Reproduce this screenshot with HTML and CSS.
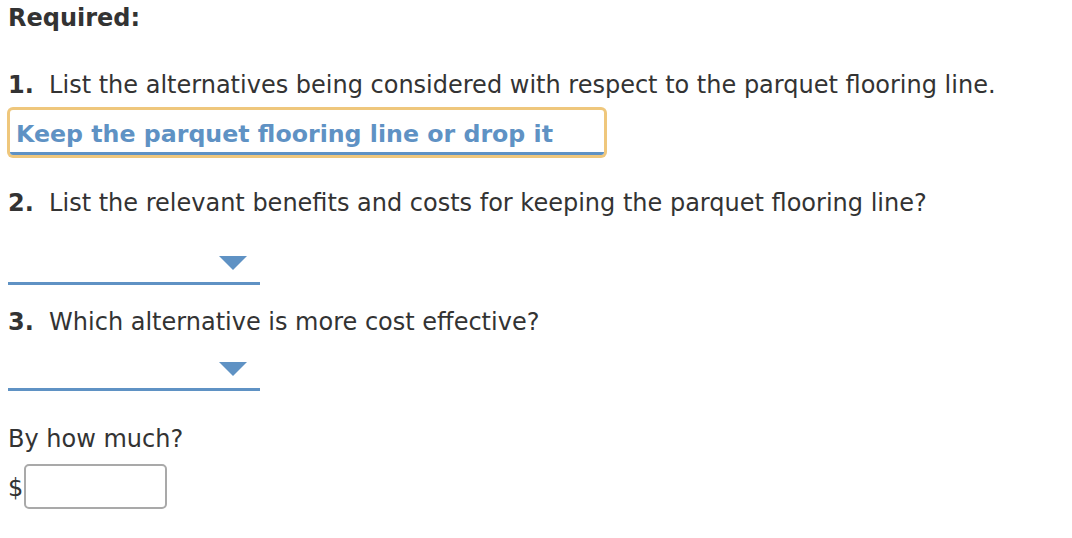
FILE: index.html
```html
<!DOCTYPE html>
<html>
<head lang="en">
    <meta charset="UTF-8">
    <title>Required</title>
    <link rel="stylesheet" href="styles.css">
</head>
<body>
<div class="required">Required:</div>

<div class="question q1"><b>1.</b>&nbsp; List the alternatives being considered with respect to the parquet flooring line.</div>
<div class="answer-box">
    <span class="answer-text">Keep the parquet flooring line or drop it</span>
</div>

<div class="question q2"><b>2.</b>&nbsp; List the relevant benefits and costs for keeping the parquet flooring line?</div>
<div class="dropdown first">
    <span class="arrow"></span>
</div>

<div class="question q3"><b>3.</b>&nbsp; Which alternative is more cost effective?</div>
<div class="dropdown">
    <span class="arrow"></span>
</div>

<div class="question q4">By how much?</div>
<div class="amount">
    <span class="dollar">$</span>
    <input type="text" class="amount-input">
</div>
</body>
</html>
```

FILE: styles.css
```css
body {
    margin: 0px;
    padding: 0px 8px;
    background: #ffffff;
    color: #333333;
    font-family: "DejaVu Sans", Verdana, sans-serif;
    font-size: 24px;
}
.required {
    font-weight: bold;
    height: 36px;
    line-height: 36px;
}
.question {
    line-height: 30px;
    height: 30px;
    white-space: nowrap;
}
.q1 {
    margin-top: 34px;
}
.answer-box {
    width: 588px;
    height: 42px;
    margin: 10px 0px 0px 2px;
    border-bottom: 3px solid #5f92c4;
    border-radius: 3px;
    box-shadow: 0px 0px 0px 3px #efc77c;
    display: flex;
    align-items: center;
    padding-left: 6px;
}
.answer-text {
    color: #5f92c4;
    font-weight: bold;
    font-size: 23.7px;
    padding-top: 5px;
}
.q2 {
    margin-top: 33px;
}
.dropdown {
    width: 252px;
    height: 51px;
    border-bottom: 3px solid #5f92c4;
    display: flex;
    justify-content: flex-end;
    align-items: flex-start;
}
.dropdown.first {
    margin-top: 13px;
}
.arrow {
    width: 0px;
    height: 0px;
    margin: 25px 13px 0px 0px;
    border-left: 14px solid transparent;
    border-right: 14px solid transparent;
    border-top: 14px solid #5f92c4;
}
.q3 {
    margin-top: 22px;
}
.q4 {
    margin-top: 33px;
}
.amount {
    display: flex;
    align-items: center;
    margin-top: 10px;
}
.dollar {
    width: 16px;
    padding-top: 2px;
}
.amount-input {
    width: 143px;
    height: 45px;
    box-sizing: border-box;
    border: 2px solid #a9a9a9;
    border-radius: 5px;
    margin: 0px;
}
```
